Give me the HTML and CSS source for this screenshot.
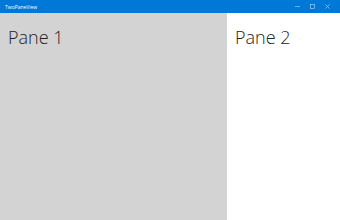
FILE: index.html
```html
<!DOCTYPE html>
<html lang="en">
<head>
    <meta charset="UTF-8">
    <title>TwoPaneView</title>
    <link rel="stylesheet" href="styles.css">
</head>
<body>
    <div class="window">
        <div class="titlebar">
            <span class="title">TwoPaneView</span>
            <div class="controls">
                <span class="ctl">
                    <svg width="5" height="5" viewBox="0 0 5 5"><line x1="0" y1="2.5" x2="5" y2="2.5" stroke="#b8d8f3" stroke-width="0.6"/></svg>
                </span>
                <span class="ctl">
                    <svg width="5" height="5" viewBox="0 0 5 5"><rect x="0.5" y="0.5" width="4" height="4" fill="none" stroke="#b8d8f3" stroke-width="0.6"/></svg>
                </span>
                <span class="ctl">
                    <svg width="5" height="5" viewBox="0 0 5 5"><path d="M0.3 0.3 L4.7 4.7 M4.7 0.3 L0.3 4.7" stroke="#b8d8f3" stroke-width="0.6"/></svg>
                </span>
            </div>
        </div>
        <div class="panes">
            <div class="pane pane-1">
                <h1>Pane 1</h1>
            </div>
            <div class="pane pane-2">
                <h1>Pane 2</h1>
            </div>
        </div>
    </div>
</body>
</html>
```

FILE: styles.css
```css
body, html {
    margin: 0;
    padding: 0;
    font-family: "Open Sans", "Noto Sans", sans-serif;
    background: #fff;
}

.window {
    width: 340px;
    height: 220px;
    display: flex;
    flex-direction: column;
}

.titlebar {
    height: 13px;
    background: #0078d7;
    color: #fff;
    display: flex;
    align-items: center;
    justify-content: space-between;
}

.titlebar .title {
    font-size: 5px;
    margin-left: 5px;
}

.controls {
    display: flex;
    height: 100%;
    margin-right: 5px;
}

.ctl {
    width: 15px;
    display: flex;
    align-items: center;
    justify-content: center;
}

.panes {
    flex: 1;
    display: flex;
}

.pane h1 {
    margin: 0;
    font-weight: 300;
    font-size: 18px;
    color: #222;
}

.pane-1 {
    width: 227px;
    background: #d3d3d3;
    padding: 12px 0 0 8px;
    box-sizing: border-box;
}

.pane-2 {
    flex: 1;
    background: #fff;
    padding: 12px 0 0 8px;
}
```
